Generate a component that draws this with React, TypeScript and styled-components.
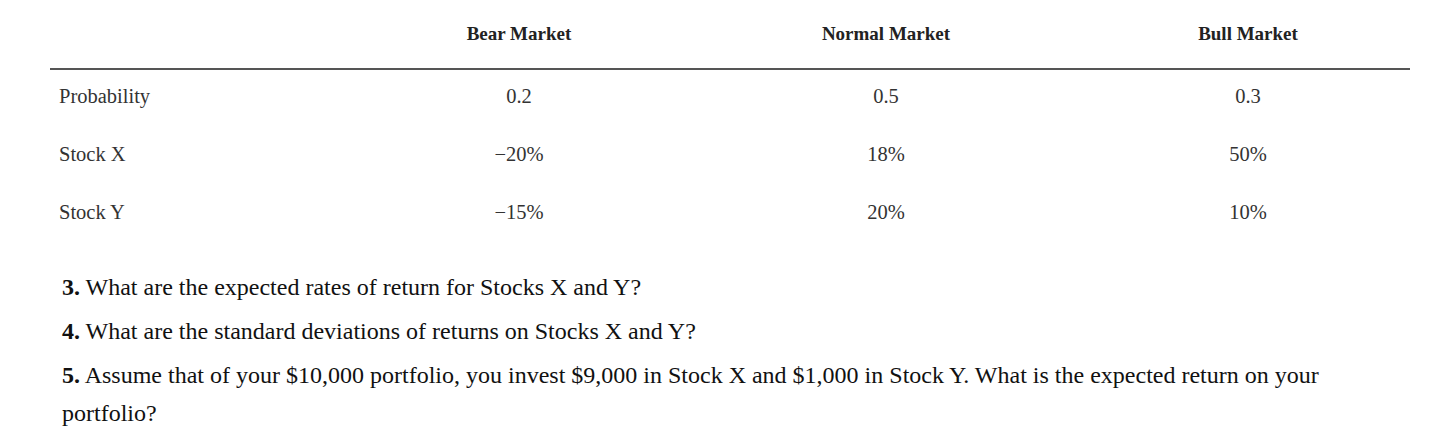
import React from "react";
import styled, { createGlobalStyle } from "styled-components";

const Global = createGlobalStyle`
  html, body { margin: 0; padding: 0; background: #fff; }
  body { font-family: "Liberation Serif", "Times New Roman", serif; }
`;

const Page = styled.div`
  display: flex;
  flex-direction: column;
  padding: 0 42px 0 50px;
`;

const Table = styled.div`
  display: grid;
  grid-template-columns: 286px 366px 368px 340px;
  width: 1360px;
  color: #333;
`;

const HeadCell = styled.div<{ $shift?: number }>`
  height: 68px;
  display: flex;
  align-items: center;
  justify-content: center;
  padding-left: ${(p) => p.$shift ?? 0}px;
  font-size: 19px;
  font-weight: bold;
  color: #222;
  border-bottom: 2px solid #555;
`;

const Cell = styled.div<{ $label?: boolean; $shift?: number }>`
  height: 58px;
  display: flex;
  align-items: center;
  justify-content: ${(p) => (p.$label ? "flex-start" : "center")};
  padding-left: ${(p) => (p.$label ? 9 : p.$shift ?? 0)}px;
  padding-bottom: 6px;
  box-sizing: border-box;
  font-size: 20.5px;
`;

const Questions = styled.div`
  display: flex;
  flex-direction: column;
  gap: 6px;
  margin-top: 24px;
  padding-left: 12px;
`;

const Question = styled.p`
  margin: 0;
  font-size: 24px;
  line-height: 38px;
  color: #111;
`;

const Num = styled.b``;

const heads = ["Bear Market", "Normal Market", "Bull Market"];
const rows: [string, string, string, string][] = [
  ["Probability", "0.2", "0.5", "0.3"],
  ["Stock X", "\u221220%", "18%", "50%"],
  ["Stock Y", "\u221215%", "20%", "10%"],
];
const shifts = [0, 0, 16];

export default function App() {
  return (
    <>
      <Global />
      <Page>
        <Table>
          <HeadCell />
          {heads.map((h, i) => (
            <HeadCell key={h} $shift={shifts[i]}>
              {h}
            </HeadCell>
          ))}
          {rows.map((r) => (
            <React.Fragment key={r[0]}>
              <Cell $label>{r[0]}</Cell>
              {r.slice(1).map((v, i) => (
                <Cell key={i} $shift={shifts[i]}>
                  {v}
                </Cell>
              ))}
            </React.Fragment>
          ))}
        </Table>
        <Questions>
          <Question>
            <Num>3.</Num> What are the expected rates of return for Stocks X and Y?
          </Question>
          <Question>
            <Num>4.</Num> What are the standard deviations of returns on Stocks X and Y?
          </Question>
          <Question>
            <Num>5.</Num> Assume that of your $10,000 portfolio, you invest $9,000 in Stock X and $1,000 in Stock Y. What is the expected return on your portfolio?
          </Question>
        </Questions>
      </Page>
    </>
  );
}
